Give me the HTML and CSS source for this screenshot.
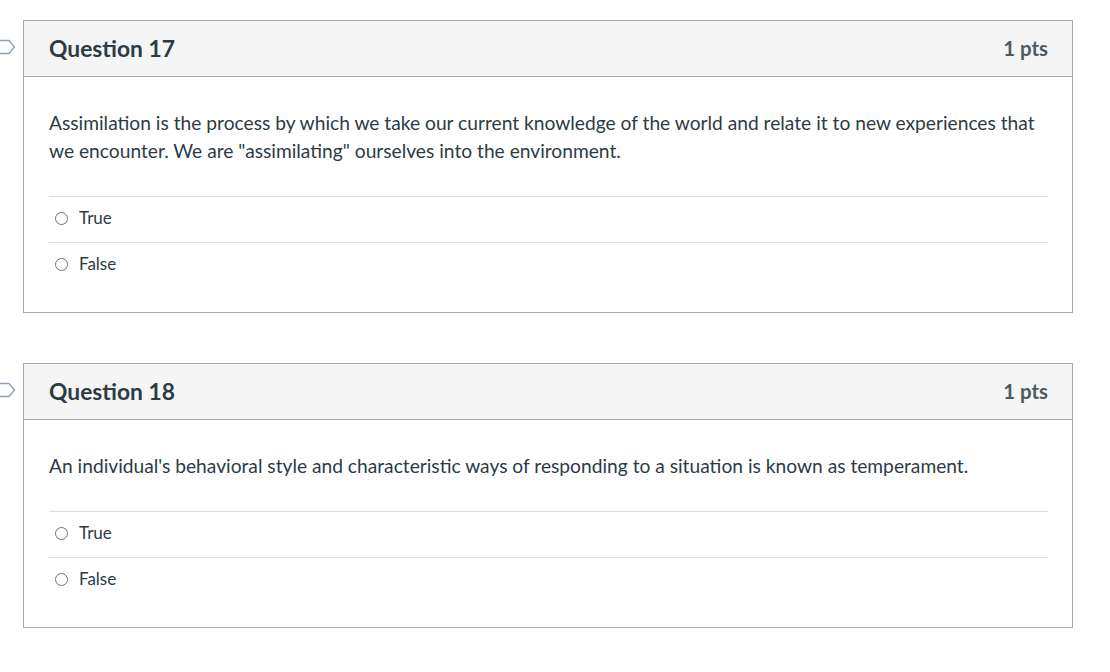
FILE: index.html
```html
<!DOCTYPE html>
<html>
<head>
<meta charset="utf-8">
<link rel="stylesheet" href="styles.css">
</head>
<body>
<div class="quiz">
  <div class="question">
    <svg class="flag" width="24" height="16" viewBox="0 0 24 16"><path d="M1 1.5 H16 L21.5 8 L16 14.5 H1 Z" fill="none" stroke="#8aa2b6" stroke-width="1.4" stroke-linejoin="miter"/></svg>
    <div class="card">
      <div class="card-header">
        <h2 class="q-title">Question 17</h2>
        <span class="pts">1 pts</span>
      </div>
      <div class="card-body">
        <p class="q-text">Assimilation is the process by which we take our current knowledge of the world and relate it to new experiences that we encounter. We are "assimilating" ourselves into the environment.</p>
        <div class="answers">
          <label class="answer"><span class="radio"></span>True</label>
          <label class="answer"><span class="radio"></span>False</label>
        </div>
      </div>
    </div>
  </div>
  <div class="question">
    <svg class="flag" width="24" height="16" viewBox="0 0 24 16"><path d="M1 1.5 H16 L21.5 8 L16 14.5 H1 Z" fill="none" stroke="#8aa2b6" stroke-width="1.4" stroke-linejoin="miter"/></svg>
    <div class="card">
      <div class="card-header">
        <h2 class="q-title">Question 18</h2>
        <span class="pts">1 pts</span>
      </div>
      <div class="card-body">
        <p class="q-text">An individual's behavioral style and characteristic ways of responding to a situation is known as temperament.</p>
        <div class="answers">
          <label class="answer"><span class="radio"></span>True</label>
          <label class="answer"><span class="radio"></span>False</label>
        </div>
      </div>
    </div>
  </div>
</div>
</body>
</html>
```

FILE: styles.css
```css
html, body {
  margin: 0;
  padding: 0;
  background: #fff;
}
body {
  font-family: Lato, "Liberation Sans", sans-serif;
  color: #2d3b45;
}
.quiz {
  display: flex;
  flex-direction: column;
  gap: 50px;
  padding: 20px 37px 0 23px;
}
.question {
  position: relative;
}
.flag {
  position: absolute;
  left: -30px;
  top: 19px;
}
.card {
  border: 1px solid #a8a8a8;
  background: #fff;
}
.card-header {
  display: flex;
  justify-content: space-between;
  align-items: center;
  height: 53px;
  padding: 0 24px 2px 25px;
  background: #f5f5f5;
  border-bottom: 1px solid #a8a8a8;
}
.q-title {
  margin: 0;
  font-size: 22.8px;
  font-weight: 700;
  color: #2d3b45;
}
.pts {
  font-size: 20.4px;
  font-weight: 700;
  color: #4d5a63;
}
.card-body {
  padding: 32px 24px 24px 25px;
}
.q-text {
  margin: 0 0 31px 0;
  font-size: 19.2px;
  line-height: 28px;
  color: #2d3b45;
}
.answers {
  display: flex;
  flex-direction: column;
}
.answer {
  display: flex;
  align-items: center;
  height: 41px;
  padding: 0 0 4px 6px;
  border-top: 1px solid #dcdcdc;
  font-size: 17px;
  color: #2d3b45;
}
.radio {
  width: 11px;
  height: 11px;
  border: 1px solid #6f6f6f;
  border-radius: 50%;
  margin-right: 11px;
  margin-top: 2px;
}
```
